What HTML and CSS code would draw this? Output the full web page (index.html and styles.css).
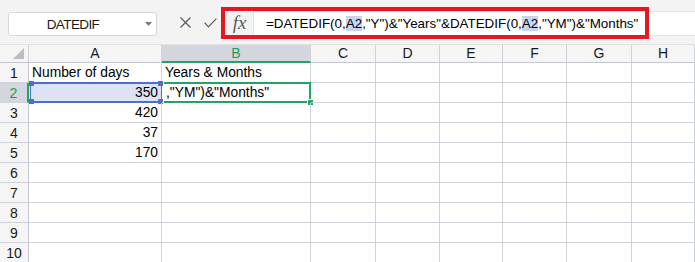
FILE: index.html
```html
<!DOCTYPE html>
<html>
<head>
<meta charset="utf-8">
<link rel="stylesheet" href="styles.css">
</head>
<body>
<div class="topbar">
  <div class="namebox">
    <span class="name">DATEDIF</span>
    <svg class="caret" width="7" height="4" viewBox="0 0 7 4"><polygon points="0,0 7,0 3.5,4" fill="#7a7a7a"/></svg>
  </div>
  <div class="btns">
    <svg class="icon-x" width="11" height="11" viewBox="0 0 11 11"><path d="M0.5 0.5 L10.5 10.5 M10.5 0.5 L0.5 10.5" stroke="#5a5a5a" stroke-width="1.2" fill="none"/></svg>
    <svg class="icon-check" width="13" height="10" viewBox="0 0 13 10"><path d="M0.6 4.6 L4.4 8.8 L12.4 0.6" stroke="#5a5a5a" stroke-width="1.2" fill="none"/></svg>
  </div>
  <div class="fbar">
    <div class="fx">fx</div>
    <div class="finput">=DATEDIF(0,<span class="ref">A2</span>,"Y")&amp;"Years"&amp;DATEDIF(0,<span class="ref">A2</span>,"YM")&amp;"Months"</div>
  </div>
  <div class="redframe"></div>
</div>
<div class="grid">
  <div class="corner"><svg width="11" height="11" viewBox="0 0 11 11"><polygon points="11,0 11,11 0,11" fill="#bdbdbd"/></svg></div>
  <div class="ch">A</div>
  <div class="ch sel">B</div>
  <div class="ch">C</div>
  <div class="ch">D</div>
  <div class="ch">E</div>
  <div class="ch">F</div>
  <div class="ch">G</div>
  <div class="ch">H</div>

  <div class="rh">1</div>
  <div class="c">Number of days</div>
  <div class="c">Years &amp; Months</div>
  <div class="c"></div><div class="c"></div><div class="c"></div><div class="c"></div><div class="c"></div><div class="c"></div>

  <div class="rh sel">2</div>
  <div class="c num range">350<span class="rbox"><i class="h tl"></i><i class="h tr"></i><i class="h bl"></i><i class="h br"></i></span></div>
  <div class="c active">,"YM")&amp;"Months"<span class="abox"><i class="fill"></i></span></div>
  <div class="c"></div><div class="c"></div><div class="c"></div><div class="c"></div><div class="c"></div><div class="c"></div>

  <div class="rh">3</div>
  <div class="c num">420</div>
  <div class="c"></div><div class="c"></div><div class="c"></div><div class="c"></div><div class="c"></div><div class="c"></div><div class="c"></div>

  <div class="rh">4</div>
  <div class="c num">37</div>
  <div class="c"></div><div class="c"></div><div class="c"></div><div class="c"></div><div class="c"></div><div class="c"></div><div class="c"></div>

  <div class="rh">5</div>
  <div class="c num">170</div>
  <div class="c"></div><div class="c"></div><div class="c"></div><div class="c"></div><div class="c"></div><div class="c"></div><div class="c"></div>

  <div class="rh">6</div>
  <div class="c"></div><div class="c"></div><div class="c"></div><div class="c"></div><div class="c"></div><div class="c"></div><div class="c"></div><div class="c"></div>

  <div class="rh">7</div>
  <div class="c"></div><div class="c"></div><div class="c"></div><div class="c"></div><div class="c"></div><div class="c"></div><div class="c"></div><div class="c"></div>

  <div class="rh">8</div>
  <div class="c"></div><div class="c"></div><div class="c"></div><div class="c"></div><div class="c"></div><div class="c"></div><div class="c"></div><div class="c"></div>

  <div class="rh">9</div>
  <div class="c"></div><div class="c"></div><div class="c"></div><div class="c"></div><div class="c"></div><div class="c"></div><div class="c"></div><div class="c"></div>

  <div class="rh">10</div>
  <div class="c"></div><div class="c"></div><div class="c"></div><div class="c"></div><div class="c"></div><div class="c"></div><div class="c"></div><div class="c"></div>
</div>
</body>
</html>
```

FILE: styles.css
```css
* { box-sizing: border-box; }
html, body {
  margin: 0;
  padding: 0;
  background: #ffffff;
  width: 695px;
  height: 262px;
  overflow: hidden;
  font-family: "Liberation Sans", Arial, sans-serif;
  color: #000;
}

.topbar {
  position: relative;
  height: 45px;
  background: #f3f3f3;
  display: flex;
  align-items: flex-start;
  border-bottom: 1px solid #e1e1e1;
}

.namebox {
  margin: 12px 0 0 8px;
  width: 149px;
  height: 24px;
  background: #ffffff;
  border: 1px solid #d6d6d6;
  border-radius: 3px;
  display: flex;
  align-items: center;
  position: relative;
}
.namebox .name {
  flex: 1;
  text-align: center;
  font-size: 13.5px;
  letter-spacing: -0.6px;
  color: #1a1a1a;
  padding-right: 8px;
}
.namebox .caret {
  margin-right: 4px;
}

.btns {
  width: 67px;
  height: 45px;
  display: flex;
  align-items: center;
  padding-left: 23px;
  gap: 13px;
}
.btns .icon-x { margin-top: -1px; }

.fbar {
  flex: 1;
  display: flex;
  margin-top: 11px;
  height: 25px;
}
.fx {
  width: 29px;
  font-family: "Liberation Serif", "Times New Roman", serif;
  font-style: italic;
  font-size: 19px;
  color: #5a5a5a;
  text-align: center;
  line-height: 23px;
  padding-left: 2px;
}
.finput {
  flex: 1;
  background: #ffffff;
  border: 1px solid #e3e3e3;
  border-right: none;
  font-size: 13.4px;
  line-height: 23px;
  padding-left: 12px;
  white-space: nowrap;
  color: #000;
}
.ref {
  background: #c9d3ee;
}

.redframe {
  position: absolute;
  left: 221px;
  top: 7px;
  width: 428px;
  height: 32px;
  border: 4px solid #e8161f;
}

.grid {
  display: grid;
  grid-template-columns: 29px 133px 149px 65px 64px 63px 64px 65px 1fr;
  grid-template-rows: 18px repeat(10, 20px);
}

.corner {
  background: #f5f5f5;
  border-right: 1px solid #d0d3da;
  border-bottom: 1px solid #c2c6cf;
  display: flex;
  justify-content: flex-end;
  align-items: flex-end;
  padding: 0 4px 3px 0;
}

.ch {
  background: #f5f5f5;
  border-right: 1px solid #d0d3da;
  border-bottom: 1px solid #c2c6cf;
  text-align: center;
  font-size: 14px;
  line-height: 17px;
  color: #1a1a1a;
}
.ch.sel {
  background: #d3d6dc;
  color: #1e9b5c;
  border-bottom: 2px solid #21a366;
}

.rh {
  background: #f5f5f5;
  border-right: 1px solid #c2c6cf;
  border-bottom: 1px solid #d0d3da;
  text-align: center;
  font-size: 14px;
  line-height: 20px;
  color: #1a1a1a;
}
.rh.sel {
  background: #d3d6dc;
  color: #1e9b5c;
  border-right: 2px solid #21a366;
}

.c {
  position: relative;
  border-right: 1px solid #d0d3da;
  border-bottom: 1px solid #d0d3da;
  font-size: 13.8px;
  line-height: 20px;
  padding: 0 3px;
  white-space: nowrap;
  color: #000;
}
.c.num { text-align: right; }
.c.range { background: #dde3f4; }

.rbox {
  position: absolute;
  left: 1px;
  top: -1px;
  right: -1px;
  bottom: -1px;
  border-top: 2px solid #4d6fc8;
  border-bottom: 2px solid #4d6fc8;
  border-left: 1px solid #4d6fc8;
  border-right: 1px solid #4d6fc8;
}
.rbox .h {
  position: absolute;
  width: 5px;
  height: 5px;
  background: #4d6fc8;
}
.rbox .tl { left: -2px; top: -3px; }
.rbox .tr { right: -2px; top: -3px; }
.rbox .bl { left: -2px; bottom: -3px; }
.rbox .br { right: -2px; bottom: -3px; }

.c.active { padding-left: 4px; }
.abox {
  position: absolute;
  left: 2px;
  top: -1px;
  right: -1px;
  bottom: -1px;
  border-top: 2px solid #21a366;
  border-bottom: 2px solid #21a366;
  border-right: 2px solid #21a366;
}
.abox .fill {
  position: absolute;
  right: -4px;
  bottom: -4px;
  width: 6px;
  height: 6px;
  background: #21a366;
  border-left: 1px solid #ffffff;
  border-top: 1px solid #ffffff;
}
```
